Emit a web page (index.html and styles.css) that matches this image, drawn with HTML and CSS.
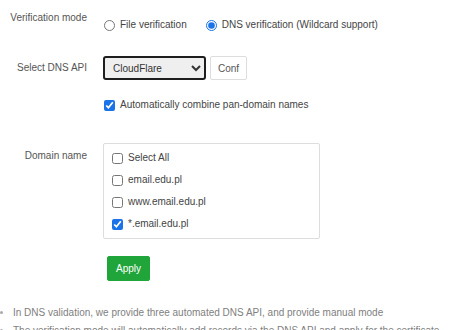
FILE: index.html
```html
<!DOCTYPE html>
<html lang="en">
<head>
    <meta charset="utf-8">
    <title>SSL - DNS verification</title>
    <link rel="stylesheet" href="styles.css">
</head>
<body>
    <div class="form">
        <div class="row row-mode">
            <span class="label">Verification mode</span>
            <div class="field field-mode">
                <label class="opt"><input type="radio" name="mode"> File verification</label>
                <label class="opt"><input type="radio" name="mode" checked> DNS verification (Wildcard support)</label>
            </div>
        </div>
        <div class="row row-api">
            <span class="label">Select DNS API</span>
            <div class="field">
                <select class="dns-select">
                    <option>CloudFlare</option>
                    <option>DNSPod</option>
                    <option>Aliyun</option>
                    <option>Manual</option>
                </select>
                <button type="button" class="btn-conf">Conf</button>
            </div>
        </div>
        <div class="row row-combine">
            <span class="label"></span>
            <div class="field">
                <label class="opt"><input type="checkbox" checked> Automatically combine pan-domain names</label>
            </div>
        </div>
        <div class="row row-domain">
            <span class="label label-domain">Domain name</span>
            <div class="domain-box">
                <label class="item"><input type="checkbox"> Select All</label>
                <label class="item"><input type="checkbox"> email.edu.pl</label>
                <label class="item"><input type="checkbox"> www.email.edu.pl</label>
                <label class="item"><input type="checkbox" checked> *.email.edu.pl</label>
            </div>
        </div>
        <div class="row row-apply">
            <span class="label"></span>
            <button type="button" class="btn-apply">Apply</button>
        </div>
    </div>
    <ul class="tips">
        <li>In DNS validation, we provide three automated DNS API, and provide manual mode</li>
        <li>The verification mode will automatically add records via the DNS API and apply for the certificate</li>
    </ul>
</body>
</html>
```

FILE: styles.css
```css
body {
    margin: 0;
    font: 10px/20px "Liberation Sans", Arial, sans-serif;
    color: #444;
    background: #fff;
    overflow: hidden;
}

.form {
    padding-top: 8px;
}

.row {
    display: flex;
    gap: 16px;
}

.label {
    flex: none;
    width: 87px;
    text-align: right;
    color: #555;
}

.field {
    display: flex;
    align-items: center;
    gap: 4px;
}

.field-mode {
    padding-top: 7px;
    gap: 18px;
}

.opt {
    display: flex;
    align-items: center;
    gap: 5px;
    white-space: nowrap;
}

input[type="radio"], input[type="checkbox"] {
    width: 11px;
    height: 11px;
    margin: 0 0 0 1px;
    accent-color: #1a73e8;
}

.row-api {
    margin-top: 21px;
    line-height: 24px;
}

.dns-select {
    width: 103px;
    height: 24px;
    font: 10px "Liberation Sans", Arial, sans-serif;
    color: #333;
    background: #efefef;
    border: 2px solid #1e1e1e;
    border-radius: 3px;
    padding: 0 4px;
}

.btn-conf {
    height: 24px;
    padding: 0 7px;
    font: 10px "Liberation Sans", Arial, sans-serif;
    color: #555;
    background: #fff;
    border: 1px solid #ddd;
    border-radius: 2px;
}

.row-combine {
    margin-top: 15px;
}

.row-domain {
    margin-top: 28px;
}

.label-domain {
    padding-top: 3px;
}

.domain-box {
    width: 217px;
    box-sizing: border-box;
    border: 1px solid #ddd;
    border-radius: 2px;
    padding: 3px 8px;
}

.item {
    display: flex;
    align-items: center;
    gap: 5px;
    height: 22px;
}

.item input {
    margin: 0;
}

.row-apply {
    margin-top: 17px;
}

.btn-apply {
    margin-left: 4px;
    width: 43px;
    height: 25px;
    padding: 0;
    font: 10px "Liberation Sans", Arial, sans-serif;
    color: #fff;
    background: #20a53a;
    border: 1px solid #20a53a;
    border-radius: 2px;
}

.tips {
    margin: 23px 0 0;
    padding-left: 13px;
    line-height: 18px;
    color: #808080;
}

.tips li::marker {
    color: #aaa;
}
```
